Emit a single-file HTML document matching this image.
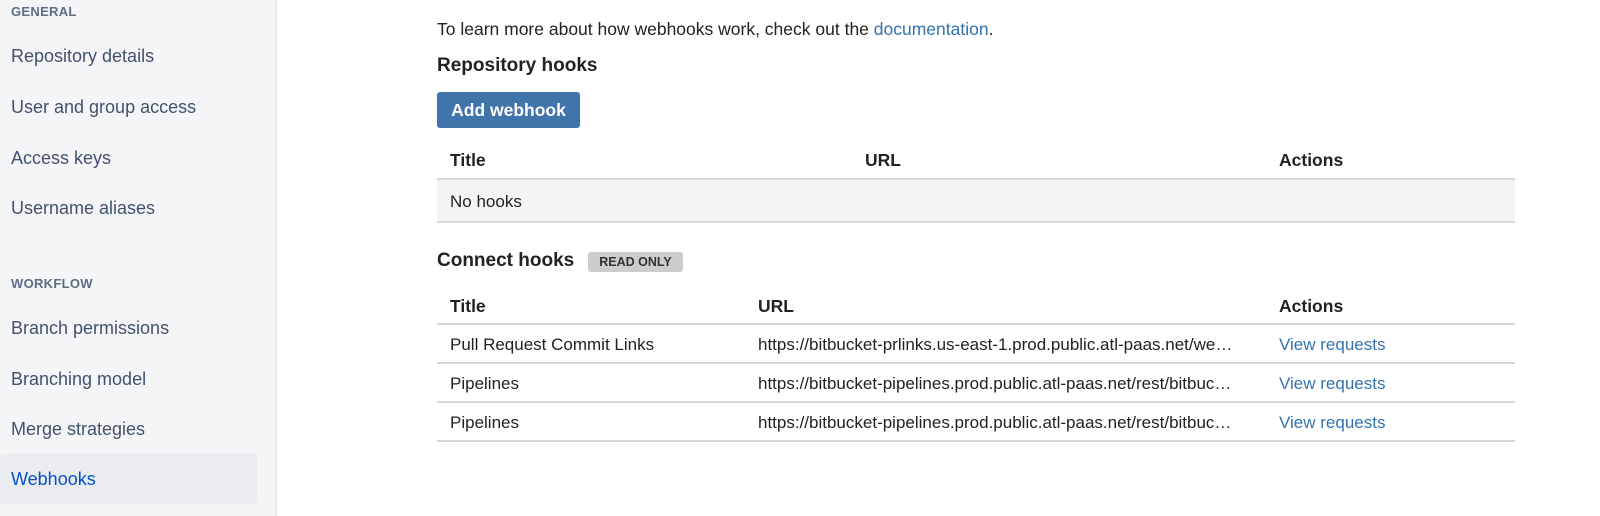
<!DOCTYPE html>
<html><head><style>
body{margin:0;width:1600px;height:516px;overflow:hidden;background:#fff;font-family:"Liberation Sans",Arial,sans-serif;position:relative;color:#172b4d}
.side{position:absolute;left:0;top:0;width:275px;height:516px;background:#f4f5f7;border-right:2px solid #e8e9ec}
.h{position:absolute;left:11px;font-size:13px;font-weight:bold;color:#5e6c84;letter-spacing:.3px}
.it{position:absolute;left:11px;font-size:18px;color:#42526e}
.act{position:absolute;left:0;top:454px;width:257px;height:50px;background:#ebecf0;border-radius:3px}
.t{position:absolute;white-space:nowrap;font-size:17px;color:#222}
.b{font-weight:bold;font-size:17.5px}
.ln{position:absolute;left:437px;width:1078px;height:2px;background:#d8d8d8}
a{color:#3572b0;text-decoration:none}
</style></head><body>
<div class="side">
<div class="act"></div>
<div class="h" style="top:4px">GENERAL</div>
<div class="it" style="top:46px">Repository details</div>
<div class="it" style="top:97px">User and group access</div>
<div class="it" style="top:148px">Access keys</div>
<div class="it" style="top:198px">Username aliases</div>
<div class="h" style="top:276px">WORKFLOW</div>
<div class="it" style="top:318px">Branch permissions</div>
<div class="it" style="top:369px">Branching model</div>
<div class="it" style="top:419px">Merge strategies</div>
<div class="it" style="top:469px;color:#0052cc">Webhooks</div>
</div>
<div class="t" style="left:437px;top:19px;font-size:17.5px">To learn more about how webhooks work, check out the <a>documentation</a>.</div>
<div class="t b" style="left:437px;top:55px;font-size:19px;color:#222">Repository hooks</div>
<div style="position:absolute;left:437px;top:92px;width:143px;height:36px;background:#4174ab;border-radius:3px;color:#fff;font-weight:bold;font-size:17.5px;line-height:36px;text-align:center">Add webhook</div>
<div class="t b" style="left:450px;top:150px">Title</div>
<div class="t b" style="left:865px;top:150px">URL</div>
<div class="t b" style="left:1279px;top:150px">Actions</div>
<div style="position:absolute;left:437px;top:180px;width:1078px;height:42px;background:#f4f4f4"></div>
<div class="ln" style="top:178px"></div>
<div class="ln" style="top:221px"></div>
<div class="t" style="left:450px;top:192px">No hooks</div>
<div class="t b" style="left:437px;top:250px;font-size:19px">Connect hooks</div>
<div style="position:absolute;left:588px;top:252px;width:95px;height:20px;background:#ccc;border-radius:3px;font-size:12.5px;font-weight:bold;color:#333;text-align:center;line-height:20px">READ ONLY</div>
<div class="t b" style="left:450px;top:296px">Title</div>
<div class="t b" style="left:758px;top:296px">URL</div>
<div class="t b" style="left:1279px;top:296px">Actions</div>
<div class="ln" style="top:323px"></div>
<div class="ln" style="top:362px"></div>
<div class="ln" style="top:401px"></div>
<div class="ln" style="top:440px"></div>
<div class="t" style="left:450px;top:335px">Pull Request Commit Links</div>
<div class="t" style="left:758px;top:335px">https://bitbucket-prlinks.us-east-1.prod.public.atl-paas.net/we…</div>
<div class="t" style="left:1279px;top:335px"><a>View requests</a></div>
<div class="t" style="left:450px;top:374px">Pipelines</div>
<div class="t" style="left:758px;top:374px">https://bitbucket-pipelines.prod.public.atl-paas.net/rest/bitbuc…</div>
<div class="t" style="left:1279px;top:374px"><a>View requests</a></div>
<div class="t" style="left:450px;top:413px">Pipelines</div>
<div class="t" style="left:758px;top:413px">https://bitbucket-pipelines.prod.public.atl-paas.net/rest/bitbuc…</div>
<div class="t" style="left:1279px;top:413px"><a>View requests</a></div>
</body></html>
